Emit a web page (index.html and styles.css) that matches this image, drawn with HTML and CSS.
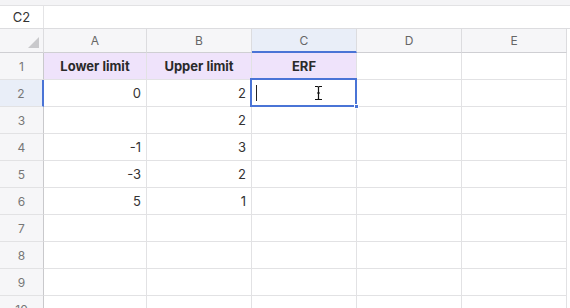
FILE: index.html
```html
<!DOCTYPE html>
<html lang="en">

<head>
  <meta charset="UTF-8">
  <title>sheet</title>
  <link rel="stylesheet" href="styles.css">
</head>

<body>
  <div class="toolbar-edge"></div>

  <div class="formula-bar">
    <div class="name-box">C2</div>
    <div class="formula-input"></div>
  </div>

  <div class="grid">
    <div class="corner"><span class="corner-tri"></span></div>
    <div class="col-head">A</div>
    <div class="col-head">B</div>
    <div class="col-head active">C</div>
    <div class="col-head">D</div>
    <div class="col-head">E</div>

    <div class="row-head">1</div>
    <div class="cell title">Lower limit</div>
    <div class="cell title">Upper limit</div>
    <div class="cell title">ERF</div>
    <div class="cell"></div>
    <div class="cell"></div>

    <div class="row-head active">2</div>
    <div class="cell num">0</div>
    <div class="cell num">2</div>
    <div class="cell selected">
      <div class="selection">
        <span class="caret"></span>
        <svg class="ibeam" width="9" height="16" viewBox="0 0 9 16">
          <path d="M1 1.5h2.5M5.5 1.5H8M4.5 2v12M1 14.5h2.5M5.5 14.5H8M3.5 1.5c0.6 0 1 0.4 1 1M5.5 1.5c-0.6 0-1 0.4-1 1M3.5 14.5c0.6 0 1-0.4 1-1M5.5 14.5c-0.6 0-1-0.4-1-1M3 8h3" stroke="#111" stroke-width="1.2" fill="none" />
        </svg>
        <span class="handle"></span>
      </div>
    </div>
    <div class="cell"></div>
    <div class="cell"></div>

    <div class="row-head">3</div>
    <div class="cell num"></div>
    <div class="cell num">2</div>
    <div class="cell"></div>
    <div class="cell"></div>
    <div class="cell"></div>

    <div class="row-head">4</div>
    <div class="cell num">-1</div>
    <div class="cell num">3</div>
    <div class="cell"></div>
    <div class="cell"></div>
    <div class="cell"></div>

    <div class="row-head">5</div>
    <div class="cell num">-3</div>
    <div class="cell num">2</div>
    <div class="cell"></div>
    <div class="cell"></div>
    <div class="cell"></div>

    <div class="row-head">6</div>
    <div class="cell num">5</div>
    <div class="cell num">1</div>
    <div class="cell"></div>
    <div class="cell"></div>
    <div class="cell"></div>

    <div class="row-head">7</div>
    <div class="cell"></div>
    <div class="cell"></div>
    <div class="cell"></div>
    <div class="cell"></div>
    <div class="cell"></div>

    <div class="row-head">8</div>
    <div class="cell"></div>
    <div class="cell"></div>
    <div class="cell"></div>
    <div class="cell"></div>
    <div class="cell"></div>

    <div class="row-head">9</div>
    <div class="cell"></div>
    <div class="cell"></div>
    <div class="cell"></div>
    <div class="cell"></div>
    <div class="cell"></div>

    <div class="row-head">10</div>
    <div class="cell"></div>
    <div class="cell"></div>
    <div class="cell"></div>
    <div class="cell"></div>
    <div class="cell"></div>
  </div>
</body>

</html>
```

FILE: styles.css
```css
* {
  box-sizing: border-box;
}

body {
  font-family: Inter, 'Noto Sans', sans-serif;
  margin: 0;
  padding: 0;
  width: 570px;
  height: 308px;
  overflow: hidden;
  background-color: #fff;
  color: #333;
  font-size: 13px;
}

.toolbar-edge {
  height: 6px;
  background-color: #f4f4f6;
  border-bottom: 1px solid #e2e2e4;
}

.formula-bar {
  display: flex;
  height: 23px;
  border-bottom: 1px solid #dcdcdf;
}

.name-box {
  width: 44px;
  border-right: 1px solid #e4e4e6;
  display: flex;
  align-items: center;
  justify-content: center;
  color: #333;
  font-size: 13px;
}

.formula-input {
  flex: 1;
}

.grid {
  display: grid;
  grid-template-columns: 44px 103px 105px 105px 105px 105px 3px;
  grid-template-rows: 24px repeat(10, 27px);
  width: 570px;
}

.grid > :nth-child(6n) {
  grid-column-end: span 2;
  width: 105px;
}

.corner,
.col-head {
  background-color: #f6f6f8;
  border-right: 1px solid #dcdcdf;
  border-bottom: 1px solid #cfcfd3;
}

.corner {
  position: relative;
}

.corner-tri {
  position: absolute;
  right: 4px;
  bottom: 4px;
  width: 0;
  height: 0;
  border-left: 11px solid transparent;
  border-bottom: 11px solid #c9c9cc;
}

.col-head {
  display: flex;
  align-items: center;
  justify-content: center;
  color: #666;
  font-size: 12px;
}

.col-head.active {
  background-color: #e9eef8;
  border-bottom: 2px solid #4a74d6;
}

.row-head {
  background-color: #f6f6f8;
  border-right: 1px solid #c9c9cc;
  border-bottom: 1px solid #e2e2e4;
  display: flex;
  align-items: center;
  justify-content: center;
  color: #777;
  font-size: 12px;
}

.row-head.active {
  background-color: #e9eef8;
  border-right: 2px solid #4a74d6;
}

.cell {
  border-right: 1px solid #e2e2e4;
  border-bottom: 1px solid #e2e2e4;
  display: flex;
  align-items: center;
  padding: 0 5px;
}

.cell.title {
  background-color: #efe3fb;
  justify-content: center;
  font-weight: 700;
  color: #2a2a2a;
}

.cell.num {
  justify-content: flex-end;
}

.cell.selected {
  position: relative;
  padding: 0;
}

.selection {
  position: absolute;
  top: -2px;
  left: -2px;
  right: -1px;
  bottom: -1px;
  border: 2px solid #4a74d6;
  background-color: #fff;
  z-index: 2;
}

.caret {
  position: absolute;
  left: 4px;
  top: 5px;
  width: 1px;
  height: 16px;
  background-color: #222;
}

.ibeam {
  position: absolute;
  left: 62px;
  top: 5px;
}

.handle {
  position: absolute;
  right: -4px;
  bottom: -4px;
  width: 5px;
  height: 5px;
  background-color: #4a74d6;
  border: 1px solid #fff;
}
```
